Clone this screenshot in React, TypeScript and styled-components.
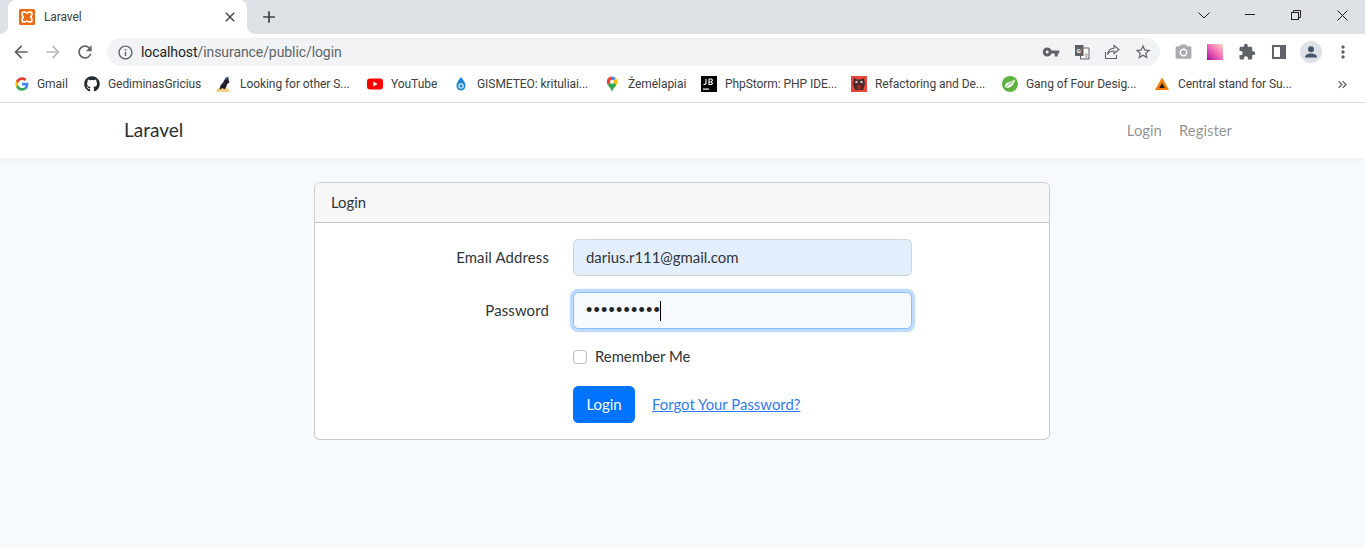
import React from 'react';
import styled, { createGlobalStyle } from 'styled-components';
import { FaGithub } from 'react-icons/fa';
import {
  MdArrowBack,
  MdArrowForward,
  MdRefresh,
  MdInfoOutline,
  MdAdd,
  MdClose,
  MdVpnKey,
  MdStarBorder,
  MdPhotoCamera,
  MdExtension,
  MdMoreVert,
  MdKeyboardDoubleArrowRight,
} from 'react-icons/md';

const GlobalStyle = createGlobalStyle`
  html, body { margin: 0; padding: 0; background: #f6fafd; }
  body { font-family: Lato, "Noto Sans", sans-serif; overflow: hidden; }
  * { box-sizing: border-box; }
`;

const Page = styled.div`
  width: 1365px;
  height: 548px;
  display: flex;
  flex-direction: column;
  background: #f6fafd;
`;

/* browser chrome */
const TabStrip = styled.div`
  height: 34px;
  background: #dee1e6;
  display: flex;
  align-items: flex-end;
  padding-left: 8px;
  flex-shrink: 0;
`;

const Tab = styled.div`
  position: relative;
  width: 239px;
  height: 34px;
  background: #fff;
  border-radius: 8px 8px 0 0;
  display: flex;
  align-items: center;
  padding: 0 9px 0 11px;
  font: 12px Roboto, sans-serif;
  letter-spacing: -0.1px;
  color: #3c4043;
  gap: 9px;
  &::before,
  &::after {
    content: '';
    position: absolute;
    bottom: 0;
    width: 8px;
    height: 8px;
  }
  &::before {
    left: -8px;
    background: radial-gradient(circle at 0 0, #dee1e6 7.5px, #fff 8.5px);
  }
  &::after {
    right: -8px;
    background: radial-gradient(circle at 100% 0, #dee1e6 7.5px, #fff 8.5px);
  }
`;

const TabTitle = styled.span`
  flex: 1;
`;

const NewTab = styled.div`
  width: 28px;
  height: 34px;
  margin-left: 8px;
  display: flex;
  align-items: center;
  justify-content: center;
  color: #3c4043;
`;

const WindowControls = styled.div`
  margin-left: auto;
  display: flex;
  align-items: center;
  height: 34px;
  color: #202124;
`;

const WindowButton = styled.div`
  width: 46px;
  height: 30px;
  display: flex;
  align-items: center;
  justify-content: center;
  align-self: flex-start;
`;

const Toolbar = styled.div`
  height: 36px;
  background: #fff;
  display: flex;
  align-items: center;
  padding-left: 5px;
  flex-shrink: 0;
`;

const NavIcon = styled.div<{ $color?: string }>`
  width: 32px;
  height: 28px;
  display: flex;
  align-items: center;
  justify-content: center;
  color: ${(p) => p.$color || '#5f6368'};
`;

const Omnibox = styled.div`
  width: 1053px;
  height: 28px;
  margin-left: 6px;
  border-radius: 14px;
  background: #f1f3f4;
  display: flex;
  align-items: center;
  padding: 0 8px 0 10px;
  font: 14px Roboto, sans-serif;
  color: #5f6368;
`;

const UrlText = styled.span`
  margin-left: 7px;
  flex: 1;
  letter-spacing: -0.08px;
  b {
    font-weight: 400;
    color: #202124;
  }
`;

const OmniIcons = styled.div`
  display: flex;
  align-items: center;
  gap: 14px;
  color: #5f6368;
`;

const ToolIcons = styled.div`
  display: flex;
  align-items: center;
  margin-left: 7px;
`;

const Bookmarks = styled.div`
  height: 33px;
  background: #fff;
  border-bottom: 1px solid #dadce0;
  display: flex;
  align-items: center;
  padding: 0 0 4px 15px;
  flex-shrink: 0;
  font: 12px Roboto, sans-serif;
  letter-spacing: -0.06px;
  color: #3c4043;
`;

const Bookmark = styled.div<{ $w: number }>`
  width: ${(p) => p.$w}px;
  flex-shrink: 0;
  display: flex;
  align-items: center;
  gap: 8px;
  white-space: nowrap;
  svg {
    flex-shrink: 0;
  }
`;

const MoreBookmarks = styled.div`
  margin-left: auto;
  width: 30px;
  height: 15px;
  color: #5f6368;
`;

/* laravel app */
const Navbar = styled.nav`
  height: 55px;
  background: #fff;
  box-shadow: 0 2px 4px rgba(0, 0, 0, 0.04);
  display: flex;
  align-items: center;
  justify-content: space-between;
  padding: 0 133px 2px 124px;
  flex-shrink: 0;
  position: relative;
`;

const Brand = styled.div`
  font-size: 19px;
  color: #2a2f33;
`;

const NavLinks = styled.div`
  display: flex;
  gap: 17px;
  font-size: 14.9px;
  color: rgba(0, 0, 0, 0.45);
`;

const Main = styled.main`
  flex: 1;
  padding: 24px 1px 0 0;
  display: flex;
  justify-content: center;
`;

const Card = styled.section`
  width: 736px;
  height: 258px;
  background: #fff;
  border: 1px solid rgba(0, 0, 0, 0.2);
  border-radius: 6px;
  font-size: 14.9px;
  line-height: 23px;
  color: #2f3439;
`;

const CardHeader = styled.div`
  height: 40px;
  padding: 0 16px;
  display: flex;
  align-items: center;
  background: #f7f7f7;
  border-bottom: 1px solid rgba(0, 0, 0, 0.2);
  border-radius: 5px 5px 0 0;
`;

const CardBody = styled.div`
  padding: 16px 0 0;
  display: flex;
  flex-direction: column;
`;

const Row = styled.div<{ $mb?: number }>`
  display: grid;
  grid-template-columns: 234px 339px;
  column-gap: 24px;
  align-items: center;
  margin-bottom: ${(p) => p.$mb ?? 16}px;
`;

const Label = styled.div`
  text-align: right;
  letter-spacing: 0.15px;
`;

const Field = styled.div<{ $focused?: boolean; $filled?: boolean }>`
  height: 37px;
  border-radius: 5.4px;
  padding: 0 12px;
  display: flex;
  align-items: center;
  background: ${(p) => (p.$filled ? '#e3eefc' : '#f6fafe')};
  border: 1px solid ${(p) => (p.$focused ? '#86bdf8' : '#ced4da')};
  box-shadow: ${(p) => (p.$focused ? '0 0 0 3.2px rgba(0, 115, 255, 0.25)' : 'none')};
`;

const Dots = styled.span`
  font-family: "Liberation Sans", sans-serif;
  font-size: 18px;
  letter-spacing: 1.2px;
  color: #212529;
`;

const Caret = styled.span`
  width: 1px;
  height: 20px;
  background: #000;
  margin-left: -1px;
`;

const CheckRow = styled.div`
  display: flex;
  align-items: center;
  gap: 8px;
  letter-spacing: -0.03px;
`;

const Checkbox = styled.span`
  width: 14px;
  height: 14px;
  border: 1px solid #b4babf;
  border-radius: 3.5px;
  background: #fff;
`;

const Actions = styled.div`
  display: flex;
  align-items: center;
`;

const LoginButton = styled.button`
  width: 62px;
  height: 37px;
  border: none;
  border-radius: 5.4px;
  background: #0073ff;
  color: #fff;
  font: inherit;
`;

const ForgotLink = styled.a`
  margin-left: 17px;
  color: #2f7bf5;
  text-decoration: underline;
`;

const XamppIcon = () => (
  <svg width="16" height="16" viewBox="0 0 16 16">
    <rect width="16" height="16" rx="1.5" fill="#f0690f" />
    <path
      d="M4 3.200h2c.9 0 1.200.8 2 .8s1.100-.8 2-.8h2c.5 0 .8.300.8.800v2c0 .9-1 1.300-1 2s1 1.100 1 2v2c0 .5-.3.800-.8.800h-2c-.9 0-1.200-.8-2-.8s-1.100.8-2 .8H4c-.5 0-.8-.3-.8-.8v-2c0-.9 1-1.300 1-2s-1-1.100-1-2V4c0-.5.3-.8.800-.8z"
      fill="none"
      stroke="#fff"
      strokeWidth="1.700"
    />
  </svg>
);

const GoogleIcon = () => (
  <svg width="14" height="14" viewBox="0 0 48 48">
    <path fill="#4285f4" d="M46 24.500c0-1.600-.1-3.100-.4-4.500H24v9h12.400c-.5 2.900-2.200 5.300-4.600 7l7.200 5.600C43.200 37.700 46 31.700 46 24.500z" />
    <path fill="#34a853" d="M24 47c6.200 0 11.400-2 15.100-5.500l-7.300-5.600c-2 1.400-4.600 2.200-7.800 2.200-6 0-11.100-4-12.900-9.500H3.600v5.800C7.300 41.800 15 47 24 47z" />
    <path fill="#fbbc05" d="M11.100 28.600c-.5-1.400-.7-3-.7-4.600s.3-3.200.7-4.600v-5.800H3.600C2 16.700 1 20.200 1 24s1 7.300 2.600 10.400z" />
    <path fill="#ea4335" d="M24 9.900c3.400 0 6.400 1.200 8.800 3.400l6.500-6.500C35.400 3.200 30.200 1 24 1 15 1 7.300 6.200 3.600 13.600l7.500 5.800C12.900 13.900 18 9.900 24 9.900z" />
  </svg>
);

const BikeIcon = () => (
  <svg width="16" height="16" viewBox="0 0 16 16">
    <path d="M0 16l1.500-3.500 4-2.500 6 2 3 4z" fill="#f6d27f" />
    <path d="M3.500 14l1-4.500 2.500-3L9 3l2-2 1.500.5L12.500 4l1 2.500L11 8l-.5 2.500-2 3-2-1.500z" fill="#1b1b2a" />
    <circle cx="10.500" cy="2.500" r="1" fill="#3b6fb5" />
    <path d="M7 8l2-1" stroke="#8d2a2a" strokeWidth="1" />
  </svg>
);

const YoutubeIcon = () => (
  <svg width="16" height="16" viewBox="0 0 16 16">
    <rect y="2.500" width="16" height="11" rx="3" fill="#f00" />
    <path d="M6.400 5.600L10.600 8l-4.200 2.400z" fill="#fff" />
  </svg>
);

const DropIcon = () => (
  <svg width="16" height="16" viewBox="0 0 16 16">
    <path d="M8 1c2 3 4.500 5 4.500 9a4.500 4.500 0 0 1-9 0c0-4 2.500-6 4.500-9z" fill="#1b87d6" />
    <circle cx="8" cy="10" r="2.200" fill="none" stroke="#d5eefb" strokeWidth="1.200" />
  </svg>
);

const MapsIcon = () => (
  <svg width="16" height="16" viewBox="0 0 16 16">
    <path d="M8 0.500a5.500 5.500 0 0 0-4.300 8.700l4.300-4.700z" fill="#ea4335" />
    <path d="M8 0.500a5.500 5.500 0 0 1 4 1.700L8 6z" fill="#4285f4" />
    <path d="M12 2.200a5.500 5.500 0 0 1 .3 7L8 6z" fill="#fbbc05" />
    <path d="M3.700 9.200L8 4.500l4.300 4.700c-1.800 2.300-3.500 3.800-4.300 6.500-.8-2.700-2.500-4.200-4.300-6.500z" fill="#34a853" />
    <circle cx="8" cy="5.700" r="2" fill="#fff" />
  </svg>
);

const JbIcon = () => (
  <svg width="16" height="16" viewBox="0 0 16 16">
    <rect width="16" height="16" fill="#000" />
    <rect x="2" y="12.500" width="6" height="1.200" fill="#fff" />
    <path d="M5 3v4.500l-1 1H2.500M8 3v5.500h2.500l1-1-1-1.500H8M8 3h2.500l1 1-1 1.500" fill="none" stroke="#fff" strokeWidth="1.100" />
  </svg>
);

const RefactorIcon = () => (
  <svg width="16" height="16" viewBox="0 0 16 16">
    <rect width="16" height="16" fill="#e8473c" />
    <path d="M3 2l3 1.500h4L13 2l1 6-2 6H4L2 8z" fill="#43292b" />
    <circle cx="5.500" cy="6" r="1.300" fill="#c9bcbc" />
    <circle cx="10.500" cy="6" r="1.300" fill="#c9bcbc" />
    <rect x="6" y="9" width="4" height="4" fill="#a32a2a" />
  </svg>
);

const SpringIcon = () => (
  <svg width="16" height="16" viewBox="0 0 16 16">
    <circle cx="8" cy="8" r="8" fill="#5fb441" />
    <path d="M13 3.500C12 8 10 11.500 5 12c-1.300-.100-2-1-2-2 0-4 5-3 10-6.500z" fill="#fff" />
    <path d="M4 11.500C6 8.500 8 7.500 10.500 6.500" stroke="#5fb441" strokeWidth="1" fill="none" />
  </svg>
);

const ConeIcon = () => (
  <svg width="16" height="16" viewBox="0 0 16 16">
    <path d="M8 1.500L15 14H1z" fill="#f57c00" />
    <path d="M8 7l2.800 5H5.200z" fill="#1e1e1e" />
  </svg>
);

const TranslateIcon = () => (
  <svg width="16" height="16" viewBox="0 0 16 16">
    <path d="M6.500 4h8.500v11H6.500z" fill="#fff" stroke="#5f6368" />
    <rect x="1" y="1" width="8.500" height="11" fill="#5f6368" />
    <text x="2.700" y="8.500" fontSize="6" fontWeight="700" fill="#fff" fontFamily="Roboto">G</text>
    <text x="10" y="12.500" fontSize="4.500" fill="#5f6368" fontFamily="Noto Sans CJK SC">文</text>
  </svg>
);

const ShareIcon = () => (
  <svg width="16" height="16" viewBox="0 0 16 16" fill="none" stroke="#5f6368" strokeWidth="1.100">
    <path d="M1.500 8v6.500h11V11" />
    <path d="M10 1.500l5 4-5 4V7c-3 0-5 1-6.500 3.500C4 6.500 6.500 4.500 10 4.200z" />
  </svg>
);

const GradientIcon = () => (
  <svg width="16" height="16" viewBox="0 0 16 16">
    <defs>
      <linearGradient id="grad" x1="0" y1="1" x2="1" y2="0">
        <stop offset="0" stopColor="#a4109f" />
        <stop offset="0.500" stopColor="#f36ab4" />
        <stop offset="1" stopColor="#fcd9c2" />
      </linearGradient>
    </defs>
    <rect width="16" height="16" fill="url(#grad)" />
  </svg>
);

const SidePanelIcon = () => (
  <svg width="14" height="14" viewBox="0 0 14 14">
    <rect x="1" y="1" width="12" height="12" fill="none" stroke="#5f6368" strokeWidth="2" />
    <rect x="8" y="1" width="5" height="12" fill="#5f6368" />
  </svg>
);

const Avatar = () => (
  <svg width="22" height="22" viewBox="0 0 22 22">
    <circle cx="11" cy="11" r="11" fill="#dee1e6" />
    <circle cx="11" cy="8.300" r="3" fill="#44546a" />
    <path d="M5 16.500c0-2.800 3-4 6-4s6 1.200 6 4z" fill="#44546a" />
  </svg>
);

const ChevronGlyph = () => (
  <svg width="12" height="7" viewBox="0 0 12 7" fill="none" stroke="#202124" strokeWidth="1">
    <path d="M.5.500L6 6 11.500.500" />
  </svg>
);

const MinimizeGlyph = () => (
  <svg width="10" height="2" viewBox="0 0 10 2">
    <rect width="10" height="1" fill="#202124" />
  </svg>
);

const RestoreGlyph = () => (
  <svg width="10" height="10" viewBox="0 0 10 10" fill="none" stroke="#202124" strokeWidth="1">
    <rect x="0.500" y="2.500" width="7" height="7" />
    <path d="M2.500 2.500v-2h7v7h-2" />
  </svg>
);

const CloseGlyph = () => (
  <svg width="11" height="11" viewBox="0 0 11 11" fill="none" stroke="#202124" strokeWidth="1">
    <path d="M.5.500l10 10M10.500.500l-10 10" />
  </svg>
);

const bookmarks = [
  { icon: <GoogleIcon />, label: 'Gmail', w: 69 },
  { icon: <FaGithub size={16} color="#24292e" />, label: 'GediminasGricius', w: 132 },
  { icon: <BikeIcon />, label: 'Looking for other S...', w: 151 },
  { icon: <YoutubeIcon />, label: 'YouTube', w: 86 },
  { icon: <DropIcon />, label: 'GISMETEO: krituliai...', w: 151 },
  { icon: <MapsIcon />, label: 'Žemėlapiai', w: 97 },
  { icon: <JbIcon />, label: 'PhpStorm: PHP IDE...', w: 150 },
  { icon: <RefactorIcon />, label: 'Refactoring and De...', w: 151 },
  { icon: <SpringIcon />, label: 'Gang of Four Desig...', w: 152 },
  { icon: <ConeIcon />, label: 'Central stand for Su...', w: 150 },
];

const App = () => (
  <Page>
    <GlobalStyle />
    <TabStrip>
      <Tab>
        <XamppIcon />
        <TabTitle>Laravel</TabTitle>
        <MdClose size={16} color="#3c4043" />
      </Tab>
      <NewTab>
        <MdAdd size={20} />
      </NewTab>
      <WindowControls>
        <WindowButton><ChevronGlyph /></WindowButton>
        <WindowButton><MinimizeGlyph /></WindowButton>
        <WindowButton><RestoreGlyph /></WindowButton>
        <WindowButton><CloseGlyph /></WindowButton>
      </WindowControls>
    </TabStrip>
    <Toolbar>
      <NavIcon><MdArrowBack size={20} /></NavIcon>
      <NavIcon $color="#b8babd"><MdArrowForward size={20} /></NavIcon>
      <NavIcon><MdRefresh size={20} /></NavIcon>
      <Omnibox>
        <MdInfoOutline size={17} />
        <UrlText><b>localhost</b>/insurance/public/login</UrlText>
        <OmniIcons>
          <MdVpnKey size={18} />
          <TranslateIcon />
          <ShareIcon />
          <MdStarBorder size={18} />
        </OmniIcons>
      </Omnibox>
      <ToolIcons>
        <NavIcon $color="#a9abae"><MdPhotoCamera size={19} /></NavIcon>
        <NavIcon><GradientIcon /></NavIcon>
        <NavIcon><MdExtension size={18} /></NavIcon>
        <NavIcon><SidePanelIcon /></NavIcon>
        <NavIcon><Avatar /></NavIcon>
        <NavIcon><MdMoreVert size={20} /></NavIcon>
      </ToolIcons>
    </Toolbar>
    <Bookmarks>
      {bookmarks.map((b) => (
        <Bookmark key={b.label} $w={b.w}>
          {b.icon}
          <span>{b.label}</span>
        </Bookmark>
      ))}
      <MoreBookmarks><MdKeyboardDoubleArrowRight size={15} /></MoreBookmarks>
    </Bookmarks>
    <Navbar>
      <Brand>Laravel</Brand>
      <NavLinks>
        <span>Login</span>
        <span>Register</span>
      </NavLinks>
    </Navbar>
    <Main>
      <Card>
        <CardHeader>Login</CardHeader>
        <CardBody>
          <Row>
            <Label>Email Address</Label>
            <Field $filled>darius.r111@gmail.com</Field>
          </Row>
          <Row>
            <Label>Password</Label>
            <Field $focused>
              <Dots>••••••••••</Dots>
              <Caret />
            </Field>
          </Row>
          <Row $mb={18}>
            <span />
            <CheckRow>
              <Checkbox />
              Remember Me
            </CheckRow>
          </Row>
          <Row $mb={0}>
            <span />
            <Actions>
              <LoginButton>Login</LoginButton>
              <ForgotLink>Forgot Your Password?</ForgotLink>
            </Actions>
          </Row>
        </CardBody>
      </Card>
    </Main>
  </Page>
);

export default App;
